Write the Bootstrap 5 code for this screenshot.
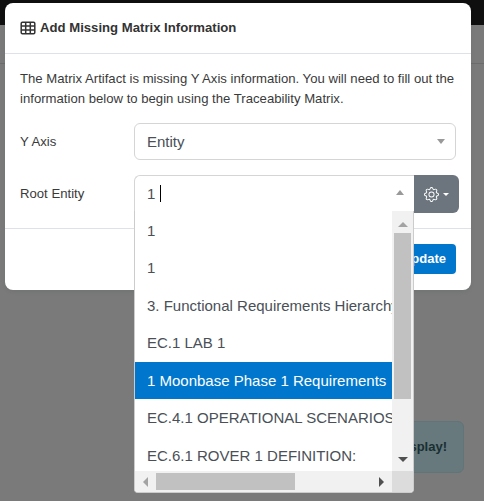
<!DOCTYPE html>
<html lang="en">
<head>
<meta charset="utf-8">
<title>Add Missing Matrix Information</title>
<link rel="stylesheet" href="https://cdn.jsdelivr.net/npm/bootstrap@5.3.0/dist/css/bootstrap.min.css">
<style>
html,body{height:100%;overflow:hidden}
body{background:#7a7a7a;font-family:"Liberation Sans",Arial,sans-serif;font-size:13.15px;color:#333;position:relative}
.topstrip{height:25px;background:#0f0f0f;color:#7d8790;overflow:hidden;font-size:14px;display:flex;gap:30px;padding-left:48px}
.topstrip span{display:block;margin-top:-13px;line-height:16px;white-space:nowrap}
.midline{height:1px;background:#6c6c6c;margin-top:38px}
.backnote{position:absolute;left:400px;top:421px;width:64px;height:52px;background:#67797c;border:1px solid #617478;border-radius:6px;color:#1a2f33;font-weight:700;font-size:13px;display:flex;align-items:center;justify-content:flex-end;padding-right:16px}
.dlg{position:absolute;left:5px;top:3px;width:466px;height:287px;background:#fff;border-radius:8px;display:flex;flex-direction:column}
.dlg-head{flex:none;height:51px;border-bottom:1px solid #dee2e6;padding:0 15px;font-weight:700;color:#333;font-size:13.15px}
.dlg-body{padding:15px 15px 0;flex:1 1 auto;min-height:0;color:#3a3a3a;line-height:20px}
.dlg-body p{margin:0 0 14px}
.dlg-foot{flex:none;height:62px;border-top:1px solid #dee2e6;padding:15px}
.frow{display:flex;align-items:flex-start;margin-bottom:15px}
.frow:last-child{margin-bottom:0}
.flabel{width:114px;flex:none;line-height:37px}
.sel{height:37px;width:322px;flex:none;border:1px solid #d5d5d5;border-radius:6px;display:flex;align-items:center;padding:0 12px;color:#495057;position:relative;font-size:15px}
.caret-d,.caret-u{position:absolute;right:10px;width:0;height:0;border-left:4px solid transparent;border-right:4px solid transparent}
.caret-d{border-top:5px solid #999;top:15px}
.caret-u{border-bottom:5px solid #999;top:14px}
.sel.opened{width:280px;border-radius:6px 0 0 0;border-right:0}
.cursor{display:inline-block;width:1px;height:17px;background:#000;margin-left:5px}
.gearbtn{width:45px;height:38px;flex:none;background:#6c757d;border:0;border-radius:0 6px 6px 0;color:#fff;padding:0;display:flex;align-items:center;justify-content:center;gap:4px}
.gearbtn .tri{width:0;height:0;border-left:3px solid transparent;border-right:3px solid transparent;border-top:3px solid #fff}
.updbtn{background:#0077cc;border:0;border-radius:4px;color:#fff;font-weight:700;font-size:13px;height:30px;width:92px;padding:0 10px;text-align:right}
.drop{position:absolute;left:134px;top:211px;width:280px;height:282px;background:#fff;border:1px solid #ccc;border-top:0;border-radius:0 0 4px 4px;overflow:hidden;display:grid;grid-template-columns:257px 21px;grid-template-rows:260px 21px}
.opts{overflow:hidden;color:#495057;font-size:15px;padding-top:.5px}
.opt{height:37.5px;line-height:37.5px;padding:0 12px;white-space:nowrap;overflow:hidden}
.opt.hit{background:#0077cc;color:#fff}
.vbar{background:#f1f1f1;position:relative}
.vthumb{position:absolute;left:2px;top:22px;width:17px;height:166px;background:#c1c1c1}
.hbar{background:#f1f1f1;position:relative}
.hthumb{position:absolute;left:21px;top:2px;height:17px;width:139px;background:#c1c1c1}
.corner{background:#dcdcdc}
.ar{position:absolute;width:0;height:0}
.ar-up{left:6px;top:11px;border-left:5px solid transparent;border-right:5px solid transparent;border-bottom:5px solid #a3a3a3}
.ar-down{left:6px;bottom:9px;border-left:5px solid transparent;border-right:5px solid transparent;border-top:5px solid #505050}
.ar-left{left:8px;top:6px;border-top:5px solid transparent;border-bottom:5px solid transparent;border-right:5px solid #a3a3a3}
.ar-right{right:8px;top:6px;border-top:5px solid transparent;border-bottom:5px solid transparent;border-left:5px solid #505050}
</style>
</head>
<body>
<div class="topstrip"><span>ICT Charts</span><span>Documents</span></div>
<div class="midline"></div>
<div class="backnote">splay!</div>

<div class="dlg shadow-sm">
  <div class="dlg-head d-flex align-items-center gap-1">
    <svg width="16" height="14" viewBox="0 0 16 14" fill="none" stroke="#333" stroke-width="1.5"><rect x="1.2" y="1.2" width="13.6" height="11.6" rx="1.2"/><path d="M1 5h14M1 9h14M5.7 1v12M10.3 1v12"/></svg>
    <span>Add Missing Matrix Information</span>
  </div>
  <div class="dlg-body">
    <p>The Matrix Artifact is missing Y Axis information. You will need to fill out the information below to begin using the Traceability Matrix.</p>
    <div class="frow">
      <div class="flabel">Y Axis</div>
      <div class="sel">Entity<span class="caret-d"></span></div>
    </div>
    <div class="frow">
      <div class="flabel">Root Entity</div>
      <div class="sel opened">1<span class="cursor"></span><span class="caret-u"></span></div>
      <button class="gearbtn" type="button" aria-label="Settings">
        <svg width="15" height="15" viewBox="0 0 16 16" fill="#fff"><path d="M8 4.754a3.246 3.246 0 1 0 0 6.492 3.246 3.246 0 0 0 0-6.492zM5.754 8a2.246 2.246 0 1 1 4.492 0 2.246 2.246 0 0 1-4.492 0z"/><path d="M9.796 1.343c-.527-1.79-3.065-1.79-3.592 0l-.094.319a.873.873 0 0 1-1.255.52l-.292-.16c-1.64-.892-3.433.902-2.54 2.541l.159.292a.873.873 0 0 1-.52 1.255l-.319.094c-1.79.527-1.79 3.065 0 3.592l.319.094a.873.873 0 0 1 .52 1.255l-.16.292c-.892 1.64.901 3.434 2.541 2.54l.292-.159a.873.873 0 0 1 1.255.52l.094.319c.527 1.79 3.065 1.79 3.592 0l.094-.319a.873.873 0 0 1 1.255-.52l.292.16c1.64.893 3.434-.902 2.54-2.541l-.159-.292a.873.873 0 0 1 .52-1.255l.319-.094c1.79-.527 1.79-3.065 0-3.592l-.319-.094a.873.873 0 0 1-.52-1.255l.16-.292c.893-1.64-.902-3.433-2.541-2.54l-.292.159a.873.873 0 0 1-1.255-.52l-.094-.319zm-2.633.283c.246-.835 1.428-.835 1.674 0l.094.319a1.873 1.873 0 0 0 2.693 1.115l.291-.16c.764-.415 1.6.42 1.184 1.185l-.159.292a1.873 1.873 0 0 0 1.116 2.692l.318.094c.835.246.835 1.428 0 1.674l-.319.094a1.873 1.873 0 0 0-1.115 2.693l.16.291c.415.764-.42 1.6-1.185 1.184l-.291-.159a1.873 1.873 0 0 0-2.693 1.116l-.094.318c-.246.835-1.428.835-1.674 0l-.094-.319a1.873 1.873 0 0 0-2.692-1.115l-.292.16c-.764.415-1.6-.42-1.184-1.185l.159-.291A1.873 1.873 0 0 0 1.945 8.93l-.319-.094c-.835-.246-.835-1.428 0-1.674l.319-.094A1.873 1.873 0 0 0 3.06 4.377l-.16-.292c-.415-.764.42-1.6 1.185-1.184l.292.159a1.873 1.873 0 0 0 2.692-1.115l.094-.319z"/></svg>
        <span class="tri"></span>
      </button>
    </div>
  </div>
  <div class="dlg-foot d-flex justify-content-end">
    <button class="updbtn" type="button">Update</button>
  </div>
</div>

<div class="drop">
  <div class="opts">
    <div class="opt">1</div>
    <div class="opt">1</div>
    <div class="opt">3. Functional Requirements Hierarchy</div>
    <div class="opt">EC.1 LAB 1</div>
    <div class="opt hit">1 Moonbase Phase 1 Requirements</div>
    <div class="opt">EC.4.1 OPERATIONAL SCENARIOS</div>
    <div class="opt">EC.6.1 ROVER 1 DEFINITION:</div>
  </div>
  <div class="vbar">
    <span class="ar ar-up"></span>
    <div class="vthumb"></div>
    <span class="ar ar-down"></span>
  </div>
  <div class="hbar">
    <span class="ar ar-left"></span>
    <div class="hthumb"></div>
    <span class="ar ar-right"></span>
  </div>
  <div class="corner"></div>
</div>
<script src="https://cdn.jsdelivr.net/npm/bootstrap@5.3.0/dist/js/bootstrap.bundle.min.js"></script>
</body>
</html>
